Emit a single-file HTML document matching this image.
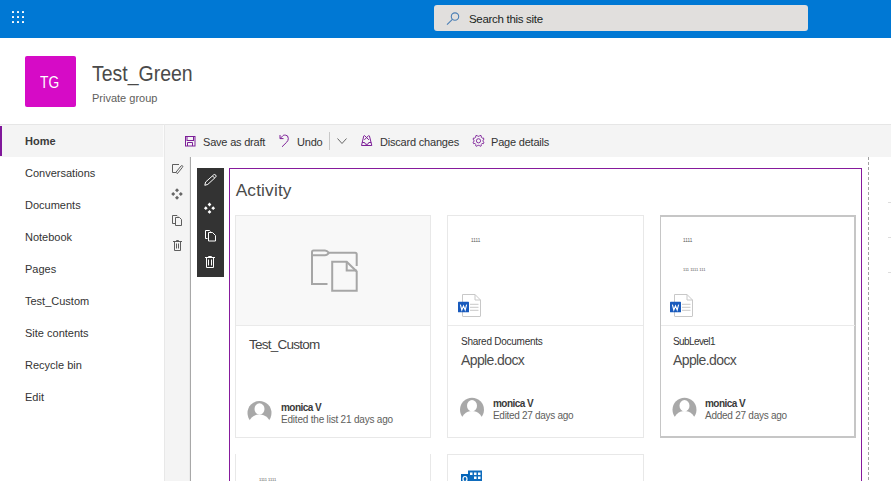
<!DOCTYPE html>
<html><head><meta charset="utf-8">
<style>
*{box-sizing:border-box;margin:0;padding:0}
html,body{width:891px;height:481px;overflow:hidden;background:#fff;font-family:"Liberation Sans",sans-serif;color:#333}
.a{position:absolute;white-space:nowrap}
#hdr{left:0;top:0;width:891px;height:38px;background:#0078d4}
#search{left:434px;top:5px;width:374px;height:26px;background:#e1dfdd;border-radius:3px}
.dot{position:absolute;width:2.4px;height:2.4px;background:#fff;border-radius:0.6px}
#logo{left:25px;top:56px;width:51px;height:51px;background:#d60bc6;border-radius:2px}
.nav{position:absolute;left:25px;font-size:11px;color:#333;white-space:nowrap}
.tbt{position:absolute;top:136px;font-size:11px;color:#333;white-space:nowrap;letter-spacing:-0.2px}
.card{position:absolute;top:215px;width:196px;height:223px;border:1px solid #e8e8e8;background:#fff}
.prev{position:absolute;left:0;top:0;right:0;height:110px;border-bottom:1px solid #eaeaea}
.lib{position:absolute;font-size:10px;color:#333;white-space:nowrap}
.fname{position:absolute;font-size:14px;color:#4d4d4d;white-space:nowrap;letter-spacing:-0.6px}
.who{position:absolute;font-size:10px;font-weight:bold;color:#3a3a3a;white-space:nowrap;letter-spacing:-0.55px}
.when{position:absolute;font-size:10px;color:#605e5c;white-space:nowrap;letter-spacing:-0.3px}
.tx{font-size:4px;color:#555}
</style></head><body>
<!-- header -->
<div id="hdr" class="a">
  <div class="dot" style="left:12.0px;top:11.0px"></div>
  <div class="dot" style="left:16.9px;top:11.0px"></div>
  <div class="dot" style="left:21.8px;top:11.0px"></div>
  <div class="dot" style="left:12.0px;top:15.9px"></div>
  <div class="dot" style="left:16.9px;top:15.9px"></div>
  <div class="dot" style="left:21.8px;top:15.9px"></div>
  <div class="dot" style="left:12.0px;top:20.8px"></div>
  <div class="dot" style="left:16.9px;top:20.8px"></div>
  <div class="dot" style="left:21.8px;top:20.8px"></div>
</div>
<div id="search" class="a">
  <svg class="a" style="left:12px;top:6px" width="14" height="15" viewBox="0 0 14 15"><circle cx="9" cy="5.6" r="3.7" fill="none" stroke="#4a7fb5" stroke-width="1.1"/><line x1="6.4" y1="8.3" x2="1" y2="13.6" stroke="#4a7fb5" stroke-width="1.1"/></svg>
  <span class="a" style="left:35px;top:8px;font-size:11.5px;color:#201f1e;letter-spacing:-0.3px">Search this site</span>
</div>
<!-- site header -->
<div id="logo" class="a"></div>
<div class="a" style="left:40px;top:74px;font-size:16px;color:#fff;transform:scaleX(0.86);transform-origin:0 0">TG</div>
<div class="a" style="left:92px;top:61px;font-size:22px;color:#4a4a4a;transform:scaleX(0.885);transform-origin:0 0">Test_Green</div>
<div class="a" style="left:92px;top:92px;font-size:11px;color:#605e5c">Private group</div>

<!-- nav -->
<div class="a" style="left:0;top:124px;width:891px;height:1px;background:#e6e6e6"></div>
<div class="a" style="left:0;top:125px;width:163px;height:32px;background:#f4f4f4"></div><div class="a" style="left:163px;top:125px;width:1px;height:32px;background:#fbfbfb"></div>
<div class="a" style="left:0;top:126px;width:2px;height:30px;background:#80179a"></div>
<div class="nav" style="top:135px;font-weight:bold;color:#3b3b3b">Home</div>
<div class="nav" style="top:167px">Conversations</div>
<div class="nav" style="top:199px">Documents</div>
<div class="nav" style="top:231px">Notebook</div>
<div class="nav" style="top:263px">Pages</div>
<div class="nav" style="top:295px">Test_Custom</div>
<div class="nav" style="top:327px">Site contents</div>
<div class="nav" style="top:359px">Recycle bin</div>
<div class="nav" style="top:391px">Edit</div>

<!-- toolbar -->
<div class="a" style="left:165px;top:125px;width:726px;height:32px;background:#f4f4f4"></div>
<div class="a" style="left:164px;top:124px;width:1px;height:357px;background:#e8e8e8"></div>
<div class="tbt" style="left:203px">Save as draft</div>
<div class="tbt" style="left:297px">Undo</div>
<div class="a" style="left:329px;top:132px;width:1px;height:18px;background:#c8c8c8"></div>
<div class="tbt" style="left:380px">Discard changes</div>
<div class="tbt" style="left:491px">Page details</div>

<!-- canvas -->
<div class="a" style="left:165px;top:157px;width:25px;height:324px;background:#f4f4f4"></div>
<div class="a" style="left:189px;top:157px;width:1px;height:324px;background:#ebebeb"></div><div class="a" style="left:190px;top:157px;width:1px;height:324px;background:#a8a8a8"></div>
<div class="a" style="left:197px;top:168px;width:27px;height:109px;background:#333"></div>
<div class="a" style="left:229px;top:168px;width:633px;height:320px;border:1px solid #861a9c"></div>
<svg class="a" style="left:868px;top:157px" width="1" height="324"><line x1="0.5" y1="0" x2="0.5" y2="324" stroke="#a0a0a0" stroke-width="1" stroke-dasharray="3 2"/></svg>
<div class="a" style="left:888px;top:202px;width:3px;height:1px;background:#ddd"></div>
<div class="a" style="left:888px;top:237px;width:3px;height:1px;background:#ddd"></div>
<div class="a" style="left:888px;top:272px;width:3px;height:1px;background:#ddd"></div>
<div class="a" style="left:235.7px;top:180px;font-size:17.3px;color:#4a4a4a;letter-spacing:0.15px">Activity</div>

<!-- cards -->
<div class="card" style="left:235px"><div class="prev" style="background:#f8f8f8"></div></div>
<div class="card" style="left:447px;width:197px"><div class="prev"></div></div>
<div class="card" style="left:660px;border:2px solid #c6c6c6;border-left-width:1px"><div class="prev" style="right:-1px;top:-1px"></div></div>
<div class="card" style="left:235px;top:454px;border-top:none"></div>
<div class="card" style="left:447px;top:454px;width:197px"></div>

<div class="a tx" style="left:471px;top:237.5px;font-size:4.6px">1111</div>
<div class="a tx" style="left:683px;top:237.5px;font-size:4.6px">1111</div>
<div class="a tx" style="left:683px;top:267px">111 1111 111</div>
<div class="a tx" style="left:259px;top:477px">1111 1111</div>

<div class="a" style="left:249px;top:336.5px;font-size:13.5px;color:#444;letter-spacing:-0.75px">Test_Custom</div>
<div class="lib" style="left:461px;top:336px;letter-spacing:-0.25px">Shared Documents</div>
<div class="fname" style="left:461px;top:352px">Apple.docx</div>
<div class="lib" style="left:673px;top:336px;letter-spacing:-0.6px">SubLevel1</div>
<div class="fname" style="left:673px;top:352px">Apple.docx</div>

<div class="who" style="left:281px;top:401.5px">monica V</div>
<div class="when" style="left:281px;top:413.5px;letter-spacing:-0.2px">Edited the list 21 days ago</div>
<div class="who" style="left:493px;top:398px">monica V</div>
<div class="when" style="left:493px;top:410px">Edited 27 days ago</div>
<div class="who" style="left:705px;top:398px">monica V</div>
<div class="when" style="left:705px;top:410px;letter-spacing:-0.25px">Added 27 days ago</div>

<svg class="a" style="left:0;top:0" width="891" height="481" viewBox="0 0 891 481">
 
 <g transform="translate(247.5 401)">
   <circle cx="12" cy="12" r="12" fill="#a8a8a8"/>
   <ellipse cx="12" cy="8" rx="5" ry="5.7" fill="#fff"/>
   <circle cx="12" cy="24.4" r="11" fill="#fff"/>
  </g>
 <g transform="translate(460 397.7)">
   <circle cx="12" cy="12" r="12" fill="#a8a8a8"/>
   <ellipse cx="12" cy="8" rx="5" ry="5.7" fill="#fff"/>
   <circle cx="12" cy="24.4" r="11" fill="#fff"/>
  </g>
 <g transform="translate(672.5 397.7)">
   <circle cx="12" cy="12" r="12" fill="#a8a8a8"/>
   <ellipse cx="12" cy="8" rx="5" ry="5.7" fill="#fff"/>
   <circle cx="12" cy="24.4" r="11" fill="#fff"/>
  </g>
 <g transform="translate(458 294)">
   <path d="M4.5 0.5 H17 L22.5 6 V22 Q22.5 22.5 22 22.5 H5 Q4.5 22.5 4.5 22 Z" fill="#fff" stroke="#c8c8c8" stroke-width="1"/>
   <path d="M17 0.5 V6 H22.5" fill="none" stroke="#c8c8c8" stroke-width="1"/>
   <path d="M12 10.3 H20.5 M12 13.3 H20.5 M12 16.3 H20.5" stroke="#c8c8c8" stroke-width="1"/>
   <rect x="0" y="7.7" width="11" height="10.6" rx="0.6" fill="#185abd"/>
   <path d="M2.4 10.7 L3.8 16 L5.5 12 L7.2 16 L8.6 10.7" fill="none" stroke="#fff" stroke-width="1.1"/>
  </g>
 <g transform="translate(670 294)">
   <path d="M4.5 0.5 H17 L22.5 6 V22 Q22.5 22.5 22 22.5 H5 Q4.5 22.5 4.5 22 Z" fill="#fff" stroke="#c8c8c8" stroke-width="1"/>
   <path d="M17 0.5 V6 H22.5" fill="none" stroke="#c8c8c8" stroke-width="1"/>
   <path d="M12 10.3 H20.5 M12 13.3 H20.5 M12 16.3 H20.5" stroke="#c8c8c8" stroke-width="1"/>
   <rect x="0" y="7.7" width="11" height="10.6" rx="0.6" fill="#185abd"/>
   <path d="M2.4 10.7 L3.8 16 L5.5 12 L7.2 16 L8.6 10.7" fill="none" stroke="#fff" stroke-width="1.1"/>
  </g>
 <!-- outlook icon -->
 <rect x="468" y="470.5" width="14" height="11" fill="#0f6cbd"/>
 <rect x="461" y="474" width="8" height="8" fill="#0364b8"/>
 <g fill="#fff"><rect x="470" y="472.5" width="2.5" height="2.5"/><rect x="474" y="472.5" width="2.5" height="2.5"/><rect x="478" y="472.5" width="2.5" height="2.5"/><rect x="474" y="476.5" width="2.5" height="2.5"/><rect x="478" y="476.5" width="2.5" height="2.5"/></g>
 <ellipse cx="465" cy="479" rx="2" ry="2.5" fill="none" stroke="#fff" stroke-width="1.2"/>

 <!-- toolbar icons -->
 <g fill="none" stroke="#7d1f98" stroke-width="1">
  <rect x="185.5" y="136.5" width="9.5" height="9.5"/>
  <rect x="187" y="136.5" width="6.5" height="4"/>
  <path d="M187.5 146 V142.5 H192.5 V146"/>
  <path d="M280 135 V138.6 H283.5"/>
  <path d="M280.3 138.3 L283 135.6 Q283.6 135.1 284.5 135.1 H285.3 Q288.3 135.1 288.3 138.5 Q288.3 140.6 286.6 142.3 L282 146.8"/>
  <path d="M363.8 135.8 L361.5 145.5 H371.8 L369.4 135.8"/>
  <path d="M362.2 142.5 H364.6 L365.6 144.3 H367.8 L368.8 142.5 H371.2"/>
  <path d="M364.3 135.3 L368.9 139.9 M368.9 135.3 L364.3 139.9"/>
 </g>
 <g fill="none" stroke="#7d1f98" stroke-width="0.9" stroke-linejoin="round"><path d="M478.50,136.30 L479.20,136.36 L479.96,135.29 L481.36,135.87 L481.15,137.16 L481.68,137.62 L482.14,138.15 L483.43,137.94 L484.01,139.34 L482.94,140.10 L483.00,140.80 L482.94,141.50 L484.01,142.26 L483.43,143.66 L482.14,143.45 L481.68,143.98 L481.15,144.44 L481.36,145.73 L479.96,146.31 L479.20,145.24 L478.50,145.30 L477.80,145.24 L477.04,146.31 L475.64,145.73 L475.85,144.44 L475.32,143.98 L474.86,143.45 L473.57,143.66 L472.99,142.26 L474.06,141.50 L474.00,140.80 L474.06,140.10 L472.99,139.34 L473.57,137.94 L474.86,138.15 L475.32,137.62 L475.85,137.16 L475.64,135.87 L477.04,135.29 L477.80,136.36 Z"/><circle cx="478.5" cy="140.8" r="2.1"/></g>
 <path d="M337.5 138.5 L342 143.5 L346.5 138.5" fill="none" stroke="#666" stroke-width="1"/>
 <!-- strip icons -->
 <g fill="none" stroke="#555" stroke-width="0.95">
  <path d="M179 164.5 H172.5 V172.5 H176"/>
  <path d="M177.3 173.7 L182.3 167.5 Q183.2 166.5 182.5 165.8 Q181.8 165.2 181 166 L176 172.2 Z"/>
  <path d="M177.0 188.2 L179.0 190.2 L177.0 192.2 L175.0 190.2 Z M173.2 192.0 L175.2 194.0 L173.2 196.0 L171.2 194.0 Z M180.8 192.0 L182.8 194.0 L180.8 196.0 L178.8 194.0 Z M177.0 195.8 L179.0 197.8 L177.0 199.8 L175.0 197.8 Z" fill="#666" stroke="none"/>
  <path d="M175.5 223.5 H172.5 V215.5 H177 L178 216.5"/>
  <path d="M175.5 217.5 H179.5 L181.5 219.5 V225.5 H175.5 Z"/>
  <path d="M173 241.5 H182 M174.5 241.5 V250.5 H180.5 V241.5 M176.5 241.5 V240.5 H178.5 V241.5 M176.5 243.5 V248.5 M178.5 243.5 V248.5"/>
 </g>
 <!-- dark toolbar icons -->
 <g fill="none" stroke="#fff" stroke-width="1">
  <path d="M204.8 185.3 L205.6 182 L213.6 174.9 Q214.8 174 215.8 175.2 Q216.6 176.3 215.5 177.3 L207.8 184.4 Z M212.6 176 L214.6 178"/>
  <path d="M209.5 202.6 L211.4 204.5 L209.5 206.4 L207.6 204.5 Z M205.8 206.3 L207.7 208.2 L205.8 210.1 L203.9 208.2 Z M213.2 206.3 L215.1 208.2 L213.2 210.1 L211.3 208.2 Z M209.5 210.0 L211.4 211.9 L209.5 213.8 L207.6 211.9 Z" fill="#fff" stroke="none"/>
  <path d="M207.5 238.5 H205.5 V230.5 H209.5 L210.5 231.5"/>
  <path d="M208.5 232.5 H212.5 L215.5 235.5 V241 H208.5 Z" fill="#333"/>
  <path d="M205 257.5 H215 M206.5 257.5 V267.5 H213.5 V257.5 M208.5 257.5 V256.5 H211.5 V257.5 M208.5 259.5 V265.5 M211.5 259.5 V265.5"/>
 </g>
 <!-- folder icon -->
 <g fill="none" stroke="#a6a6a6" stroke-width="2">
  <path d="M327.5 284 H312 V252 Q312 250.5 313.5 250.5 H325 Q327 250.5 329 252.8 H355.2 Q356.7 252.8 356.7 254.3 V266"/>
  <path d="M312 255.3 H325 Q327 255.3 329 252.8"/>
  <path d="M332.2 290.7 V261.7 H346.7 L356.7 271.5 V290.7 Z"/>
  <path d="M346.7 261.7 V270.4 H356.7"/>
 </g>
</svg>
</body></html>
